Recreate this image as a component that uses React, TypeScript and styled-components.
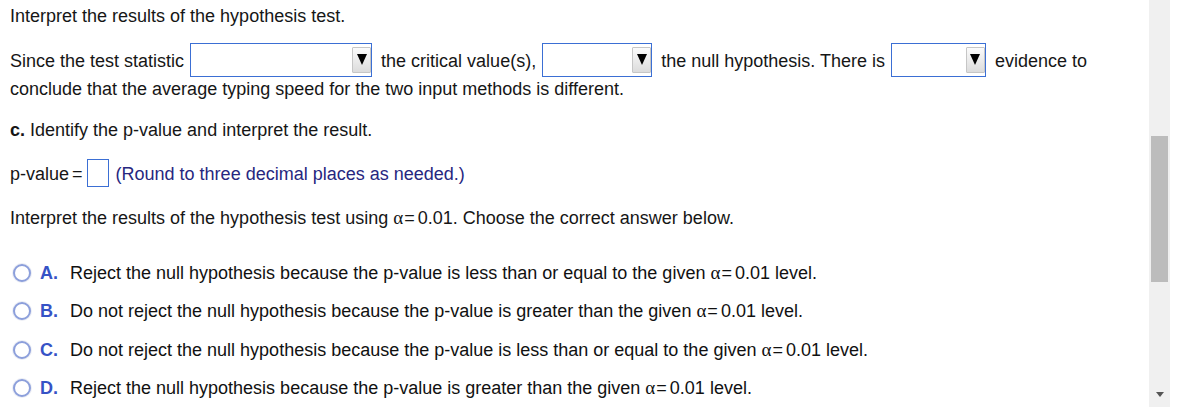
import React from "react";
import styled, { createGlobalStyle } from "styled-components";

const Global = createGlobalStyle`
  html, body { margin: 0; padding: 0; background: #ffffff; }
  body {
    font-family: "Liberation Sans", Arial, sans-serif;
    font-size: 18px;
    color: #161616;
  }
`;

const Page = styled.div`
  display: flex;
  width: 1180px;
  height: 419px;
  overflow: hidden;
`;

const Main = styled.main`
  flex: 1;
  min-width: 0;
  padding: 4px 30px 0 10px;
  line-height: 24px;
`;

const Para = styled.p<{ $mt: number }>`
  margin: ${(p) => p.$mt}px 0 0;
`;

const SelectBox = styled.span<{ $w: number }>`
  display: inline-block;
  overflow: hidden;
  box-sizing: border-box;
  width: ${(p) => p.$w}px;
  height: 34px;
  margin: 0 4px 0 1px;
  border: 1px solid #3b6fd4;
  background: #fff;
  vertical-align: -10px;
`;

const SelectInner = styled.span`
  display: flex;
  height: 100%;
  justify-content: flex-end;
  align-items: center;
`;

const DropButton = styled.span`
  display: flex;
  align-items: center;
  justify-content: center;
  box-sizing: border-box;
  width: 19px;
  height: 26px;
  border: 1px solid #c6c6c6;
  border-radius: 1px;
  background: linear-gradient(#fbfbfb, #dcdcdc);
`;

const Triangle = styled.span`
  width: 0;
  height: 0;
  margin-top: -2px;
  border-left: 5.5px solid transparent;
  border-right: 5.5px solid transparent;
  border-top: 11px solid #000;
`;

const Equals = styled.span`
  margin-left: 3px;
`;

const AnswerBox = styled.span`
  display: inline-block;
  box-sizing: border-box;
  width: 22px;
  height: 28px;
  margin-left: 4px;
  border: 1px solid #3b6fd4;
  background: #fff;
  vertical-align: -7px;
`;

const Hint = styled.span`
  margin-left: 7px;
  color: #27277f;
`;

const Bold = styled.b`
  font-weight: bold;
`;

const Alpha = styled.span`
  font-family: "Liberation Serif", "Times New Roman", serif;
  font-size: 19px;
  margin-right: 1px;
`;

const EqSign = styled.span`
  margin-right: 3px;
`;

const Options = styled.div`
  display: flex;
  flex-direction: column;
  gap: 14.4px;
  margin-top: 31px;
`;

const Option = styled.label`
  display: flex;
  align-items: center;
  height: 24px;
  color: #111;
`;

const Radio = styled.span`
  flex-shrink: 0;
  box-sizing: border-box;
  width: 18px;
  height: 18px;
  margin-left: 3px;
  border: 2px solid #8c9fdb;
  border-radius: 50%;
  background: #fff;
  box-shadow: 0 0 0 1px #eceef5;
`;

const Letter = styled.span`
  flex-shrink: 0;
  width: 30px;
  margin-left: 9px;
  font-weight: bold;
  color: #3653c6;
`;

const Scrollbar = styled.div`
  display: flex;
  flex-direction: column;
  align-items: center;
  flex-shrink: 0;
  width: 21px;
  height: 407px;
  margin-right: 10px;
  background: #f0f0f0;
`;

const Thumb = styled.div`
  width: 17px;
  height: 146px;
  margin-top: 136px;
  background: #bcbcbc;
`;

const ArrowDown = styled.div`
  margin-top: auto;
  margin-bottom: 10px;
  width: 0;
  height: 0;
  border-left: 4.5px solid transparent;
  border-right: 4.5px solid transparent;
  border-top: 5px solid #555;
`;

const Select = ({ w }: { w: number }) => (
  <SelectBox $w={w}>
    <SelectInner>
      <DropButton>
        <Triangle />
      </DropButton>
    </SelectInner>
  </SelectBox>
);

const AlphaEq = () => (
  <>
    <Alpha>α</Alpha>
    <EqSign>=</EqSign>0.01
  </>
);

const choices = [
  { letter: "A.", text: "Reject the null hypothesis because the p-value is less than or equal to the given " },
  { letter: "B.", text: "Do not reject the null hypothesis because the p-value is greater than the given " },
  { letter: "C.", text: "Do not reject the null hypothesis because the p-value is less than or equal to the given " },
  { letter: "D.", text: "Reject the null hypothesis because the p-value is greater than the given " },
];

export default function App() {
  return (
    <>
      <Global />
      <Page>
        <Main>
          <Para $mt={0}>Interpret the results of the hypothesis test.</Para>
          <Para $mt={15}>
            Since the test statistic <Select w={182} /> the critical value(s), <Select w={110} /> the null
            hypothesis. There is <Select w={95} /> evidence to conclude that the average typing speed for the two
            input methods is different.
          </Para>
          <Para $mt={17}>
            <Bold>c.</Bold> Identify the p-value and interpret the result.
          </Para>
          <Para $mt={17}>
            p-value<Equals>=</Equals>
            <AnswerBox />
            <Hint>(Round to three decimal places as needed.)</Hint>
          </Para>
          <Para $mt={19}>
            Interpret the results of the hypothesis test using <AlphaEq />. Choose the correct answer below.
          </Para>
          <Options>
            {choices.map((c) => (
              <Option key={c.letter}>
                <Radio />
                <Letter>{c.letter}</Letter>
                <span>
                  {c.text}
                  <AlphaEq /> level.
                </span>
              </Option>
            ))}
          </Options>
        </Main>
        <Scrollbar>
          <Thumb />
          <ArrowDown />
        </Scrollbar>
      </Page>
    </>
  );
}
